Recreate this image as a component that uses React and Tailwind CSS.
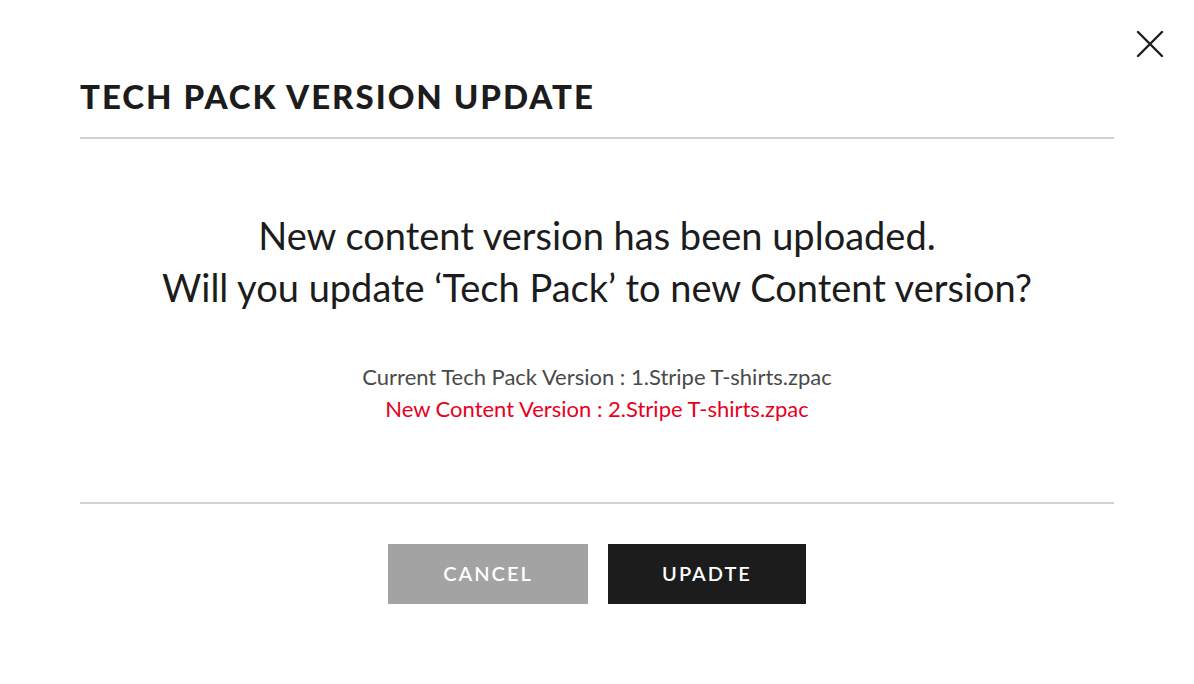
import React from 'react';

const font = { fontFamily: 'Lato, "Noto Sans", sans-serif' };

const CloseIcon = () => (
  <svg width="28" height="28" viewBox="0 0 28 28" fill="none">
    <path d="M2 2L26 26M26 2L2 26" stroke="#1c1c1c" strokeWidth="2.4" strokeLinecap="round" />
  </svg>
);

const App = () => {
  return (
    <div className="relative w-full h-[684px] bg-white px-[80px] text-[#1c1c1c]" style={font}>
      <button className="absolute top-[30px] right-[30px] p-0">
        <CloseIcon />
      </button>

      <div className="h-[139px] pt-[77px] border-b-2 border-[#d2d2d2]">
        <h2 className="text-[33px] leading-[38px] font-black tracking-[0.06em] uppercase">
          Tech Pack Version Update
        </h2>
      </div>

      <div className="h-[365px] border-b-2 border-[#d2d2d2] flex flex-col items-center pt-[70px]">
        <p className="text-[38px] leading-[52px] text-center text-[#1c1c1c]">
          New content version has been uploaded.
          <br />
          Will you update ‘Tech Pack’ to new Content version?
        </p>
        <div className="mt-[48px] text-[22px] leading-[32px] text-center">
          <p className="text-[#4a4a4a]">Current Tech Pack Version : 1.Stripe T-shirts.zpac</p>
          <p className="text-[#e8001c]">New Content Version : 2.Stripe T-shirts.zpac</p>
        </div>
      </div>

      <div className="flex justify-center gap-[20px] pt-[40px]">
        <button className="w-[200px] h-[60px] pb-[3px] bg-[#a3a3a4] text-white text-[20px] font-semibold tracking-[0.1em]">
          CANCEL
        </button>
        <button className="w-[198px] h-[60px] pb-[3px] bg-[#1c1c1c] text-white text-[20px] font-semibold tracking-[0.1em]">
          UPADTE
        </button>
      </div>
    </div>
  );
};

export default App;
